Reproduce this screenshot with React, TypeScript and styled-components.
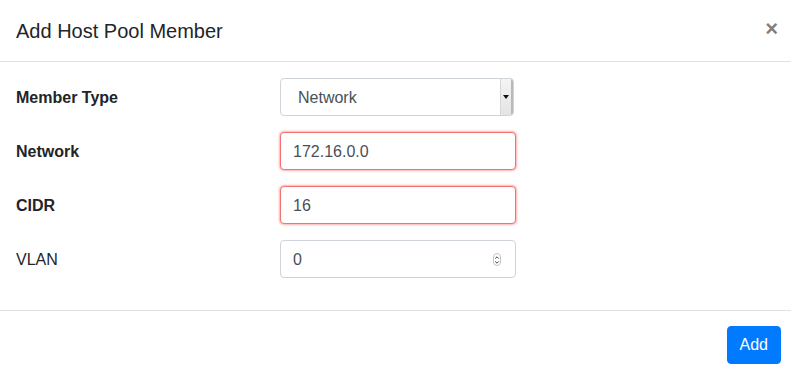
import React from "react";
import styled, { createGlobalStyle } from "styled-components";

const GlobalStyle = createGlobalStyle`
  html, body {
    margin: 0;
    padding: 0;
    background: #fff;
  }
  body {
    font-family: "Liberation Sans", Arial, sans-serif;
    color: #212529;
    font-size: 16px;
  }
  * { box-sizing: border-box; }
`;

type Field = {
  label: string,
  value: string,
  bold: boolean,
  kind: "select" | "text" | "number",
  invalid?: boolean
}

const fields: Field[] = [
  { label: "Member Type", value: "Network", bold: true, kind: "select" },
  { label: "Network", value: "172.16.0.0", bold: true, kind: "text", invalid: true },
  { label: "CIDR", value: "16", bold: true, kind: "text", invalid: true },
  { label: "VLAN", value: "0", bold: false, kind: "number" },
];

const App: React.FC = () => {
  return (
    <>
      <GlobalStyle />
      <StyledModal>
        <StyledHeader>
          <StyledTitle>Add Host Pool Member</StyledTitle>
          <StyledClose aria-label="Close">×</StyledClose>
        </StyledHeader>

        <StyledBody>
          {fields.map((f) => (
            <StyledRow key={f.label}>
              <StyledLabel $bold={f.bold}>{f.label}</StyledLabel>
              {f.kind === "select" && (
                <StyledSelect>
                  <StyledSelectValue>{f.value}</StyledSelectValue>
                  <StyledSelectArrow>
                    <svg width="6" height="4" viewBox="0 0 6 4">
                      <path d="M0 0 L6 0 L3 4 Z" fill="#111" />
                    </svg>
                  </StyledSelectArrow>
                </StyledSelect>
              )}
              {f.kind === "text" && (
                <StyledInput $invalid={f.invalid} defaultValue={f.value} />
              )}
              {f.kind === "number" && (
                <StyledNumberBox>
                  <StyledNumberInput defaultValue={f.value} />
                  <StyledSpinner>
                    <svg width="6" height="10" viewBox="0 0 6 10">
                      <path d="M1.2 3.6 L3 1.8 L4.8 3.6" stroke="#444" strokeWidth="1" fill="none" />
                      <path d="M1.2 6.4 L3 8.2 L4.8 6.4" stroke="#444" strokeWidth="1" fill="none" />
                    </svg>
                  </StyledSpinner>
                </StyledNumberBox>
              )}
            </StyledRow>
          ))}
        </StyledBody>

        <StyledFooter>
          <StyledButton type="button">Add</StyledButton>
        </StyledFooter>
      </StyledModal>
    </>
  );
};

export default App;

const StyledModal = styled.div`
  width: 791px;
  background: #fff;
`;
const StyledHeader = styled.div`
  display: flex;
  align-items: center;
  justify-content: space-between;
  height: 62px;
  padding: 0 13px 0 16px;
  border-bottom: 1px solid #dee2e6;
`;
const StyledTitle = styled.h5`
  margin: 0;
  font-size: 20px;
  font-weight: 400;
  line-height: 30px;
  color: #212529;
  padding-top: 1px;
`;
const StyledClose = styled.button`
  border: 0;
  background: transparent;
  padding: 0;
  margin-top: -3px;
  font-family: "Liberation Sans", Arial, sans-serif;
  font-size: 22px;
  font-weight: 700;
  line-height: 1;
  color: #000;
  opacity: 0.5;
  cursor: pointer;
`;
const StyledBody = styled.div`
  padding: 16px;
`;
const StyledRow = styled.div`
  display: grid;
  grid-template-columns: 264px 236px;
  align-items: center;
  margin-bottom: 16px;
`;
const StyledLabel = styled.label<{ $bold: boolean }>`
  padding-top: 2px;
  font-size: 16px;
  font-weight: ${(p) => (p.$bold ? 700 : 400)};
  line-height: 24px;
  color: #212529;
`;
const StyledSelect = styled.div`
  display: flex;
  width: 234px;
  height: 38px;
  border: 1px solid #ced4da;
  border-radius: 4px;
  background: #fff;
  overflow: hidden;
`;
const StyledSelectValue = styled.span`
  flex: 1;
  padding: 0 0 0 17px;
  line-height: 37px;
  font-size: 16px;
  color: #495057;
`;
const StyledSelectArrow = styled.span`
  width: 13px;
  display: flex;
  align-items: center;
  justify-content: center;
  background: linear-gradient(#f4f4f4, #e4e4e4);
  border-left: 1px solid #d6d6d6;
  border-right: 2px solid #b8b8b8;
`;
const StyledInput = styled.input<{ $invalid?: boolean }>`
  width: 236px;
  height: 38px;
  padding: 7px 12px 5px;
  font-family: "Liberation Sans", Arial, sans-serif;
  font-size: 16px;
  color: #495057;
  border: 1px solid ${(p) => (p.$invalid ? "#f27272" : "#ced4da")};
  border-radius: 4px;
  box-shadow: ${(p) => (p.$invalid ? "0 0 2px 1px rgba(255, 80, 80, 0.45)" : "none")};
  outline: none;
`;
const StyledNumberBox = styled.div`
  display: flex;
  align-items: center;
  width: 236px;
  height: 38px;
  padding: 1px 14px 0 12px;
  border: 1px solid #ced4da;
  border-radius: 4px;
`;
const StyledNumberInput = styled.input`
  flex: 1;
  min-width: 0;
  border: 0;
  outline: none;
  padding: 0;
  font-family: "Liberation Sans", Arial, sans-serif;
  font-size: 16px;
  color: #495057;
`;
const StyledSpinner = styled.span`
  display: flex;
  align-items: center;
  justify-content: center;
  width: 8px;
  height: 13px;
  border: 1px solid #c4c4c4;
  border-radius: 4px;
`;
const StyledFooter = styled.div`
  display: flex;
  justify-content: flex-end;
  padding: 15px 10px 12px 16px;
  border-top: 1px solid #dee2e6;
`;
const StyledButton = styled.button`
  height: 38px;
  padding: 0 12px;
  font-family: "Liberation Sans", Arial, sans-serif;
  font-size: 16px;
  line-height: 24px;
  color: #fff;
  background: #007bff;
  border: 1px solid #007bff;
  border-radius: 4px;
  cursor: pointer;
`;
